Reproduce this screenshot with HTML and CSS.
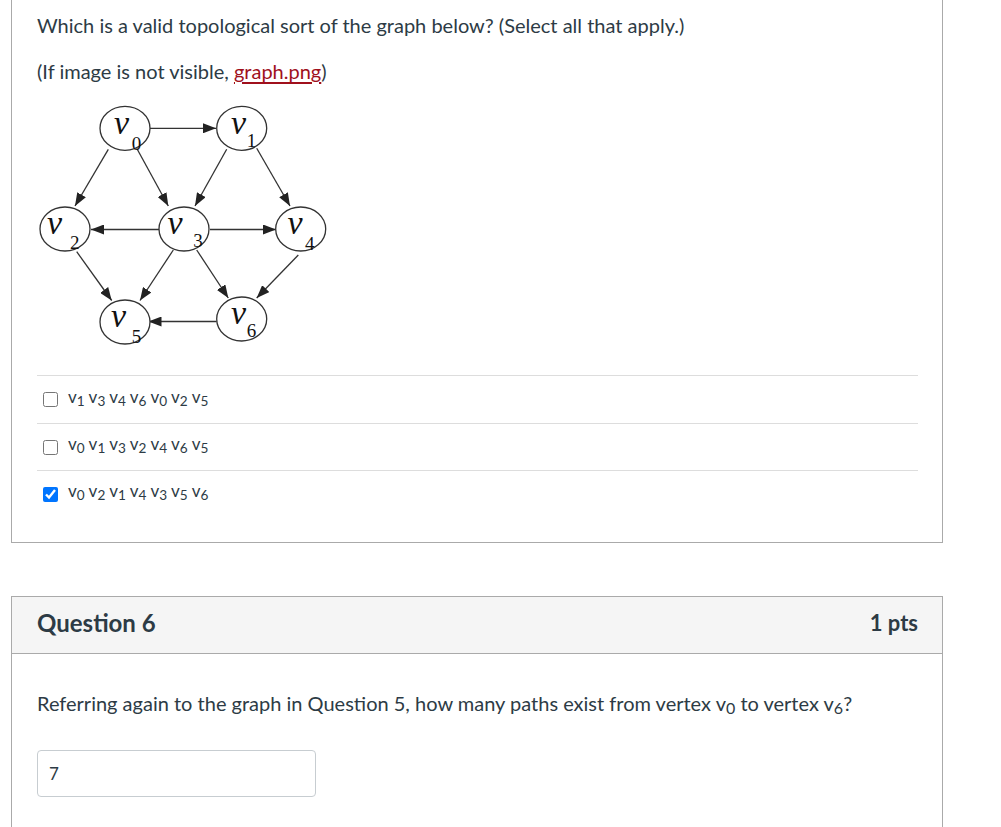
FILE: index.html
```html
<!DOCTYPE html>
<html lang="en">
<head>
<meta charset="utf-8">
<title>Quiz</title>
<link rel="stylesheet" href="styles.css">
</head>
<body>
<div class="page">
  <section class="card card-first">
    <div class="q-text">
      <p class="q-line">Which is a valid topological sort of the graph below? (Select all that apply.)</p>
      <p class="q-line">(If image is not visible, <a class="link" href="#">graph.png</a>)</p>
      <svg class="graph" width="300" height="250" viewBox="37 100 300 250" xmlns="http://www.w3.org/2000/svg">
        <defs>
          <marker id="ah" markerUnits="userSpaceOnUse" markerWidth="13" markerHeight="10" refX="13" refY="5" orient="auto">
            <path d="M0,0 L13,5 L0,10 z" fill="#222"/>
          </marker>
        </defs>
        <g stroke="#333" stroke-width="1.3" fill="none" marker-end="url(#ah)">
          <line x1="150" y1="128.3" x2="216" y2="128.3"/>
          <line x1="108.3" y1="149.3" x2="75" y2="206"/>
          <line x1="136.7" y1="148.3" x2="168.3" y2="206"/>
          <line x1="226.7" y1="149.3" x2="195" y2="206"/>
          <line x1="256.7" y1="148.3" x2="290" y2="206"/>
          <line x1="160" y1="229.5" x2="91" y2="229.5"/>
          <line x1="210" y1="229.5" x2="276" y2="229.5"/>
          <line x1="76.7" y1="251.7" x2="111.7" y2="300.5"/>
          <line x1="173.3" y1="250" x2="140" y2="300.5"/>
          <line x1="196.7" y1="250" x2="228.3" y2="298"/>
          <line x1="298.3" y1="255" x2="256.7" y2="298"/>
          <line x1="216.7" y1="321.5" x2="148.5" y2="321.5"/>
        </g>
        <g stroke="#333" stroke-width="1.3" fill="#fff">
          <ellipse cx="125" cy="128.3" rx="25" ry="22"/>
          <ellipse cx="241.7" cy="128.3" rx="25" ry="22"/>
          <ellipse cx="65" cy="229" rx="25" ry="22"/>
          <ellipse cx="184" cy="229" rx="25" ry="22"/>
          <ellipse cx="300.7" cy="229" rx="25" ry="22"/>
          <ellipse cx="125" cy="322" rx="25" ry="22"/>
          <ellipse cx="241.7" cy="319" rx="25" ry="22"/>
        </g>
        <g class="node-v">
          <text x="114" y="134">v</text>
          <text x="231" y="134">v</text>
          <text x="47" y="234">v</text>
          <text x="167.5" y="234">v</text>
          <text x="287.5" y="234">v</text>
          <text x="111" y="327">v</text>
          <text x="231" y="324">v</text>
        </g>
        <g class="node-sub">
          <text x="131.7" y="150">0</text>
          <text x="246.7" y="147">1</text>
          <text x="70" y="249">2</text>
          <text x="193.3" y="247">3</text>
          <text x="305" y="250">4</text>
          <text x="131.7" y="343">5</text>
          <text x="246.7" y="337">6</text>
        </g>
      </svg>
    </div>
    <div class="answers">
      <label class="answer">
        <input class="check" type="checkbox">
        <span class="answer-text">v<sub>1</sub> v<sub>3</sub> v<sub>4</sub> v<sub>6</sub> v<sub>0</sub> v<sub>2</sub> v<sub>5</sub></span>
      </label>
      <label class="answer">
        <input class="check" type="checkbox">
        <span class="answer-text">v<sub>0</sub> v<sub>1</sub> v<sub>3</sub> v<sub>2</sub> v<sub>4</sub> v<sub>6</sub> v<sub>5</sub></span>
      </label>
      <label class="answer">
        <input class="check" type="checkbox" checked>
        <span class="answer-text">v<sub>0</sub> v<sub>2</sub> v<sub>1</sub> v<sub>4</sub> v<sub>3</sub> v<sub>5</sub> v<sub>6</sub></span>
      </label>
    </div>
  </section>

  <section class="card card-second">
    <header class="card-header">
      <h2 class="q-title">Question 6</h2>
      <span class="q-pts">1 pts</span>
    </header>
    <div class="q-body">
      <p class="q-line">Referring again to the graph in Question 5, how many paths exist from vertex v<sub>0</sub> to vertex v<sub>6</sub>?</p>
      <input class="num-input" type="text" value="7">
    </div>
  </section>
</div>
</body>
</html>
```
FILE: styles.css
```css
html, body {
  margin: 0;
  padding: 0;
  background: #fff;
}

body {
  font-family: Lato, "Noto Sans", sans-serif;
  color: #2d3b45;
}

.page {
  padding-left: 11px;
  width: 932px;
}

.card {
  box-sizing: border-box;
  width: 932px;
  border: 1px solid #aaaaaa;
  background: #fff;
}

.card-first {
  border-top: none;
  padding: 0 24px 25px 25px;
}

.q-line {
  margin: 0;
  font-size: 20px;
  line-height: 30px;
}

.q-text .q-line:first-child {
  padding-top: 10px;
}

.q-text .q-line + .q-line {
  margin-top: 16px;
}

.link {
  color: #a0101c;
  text-decoration: underline;
  text-decoration-thickness: 2px;
  text-underline-offset: 3px;
}

.graph {
  display: block;
  margin-top: 14px;
}

.node-v text {
  font-family: "Liberation Serif", serif;
  font-style: italic;
  font-size: 34px;
  fill: #111;
}

.node-sub text {
  font-family: "Liberation Serif", serif;
  font-size: 19px;
  fill: #111;
}

.answers {
  margin-top: 25px;
}

.answer {
  display: flex;
  align-items: center;
  gap: 10px;
  height: 47px;
  border-top: 1px solid #dddddd;
  padding-left: 6px;
}

.answer + .answer {
  height: 46px;
}

.check {
  width: 15px;
  height: 15px;
  margin: 0;
  accent-color: #0075ff;
}

.answer-text {
  font-size: 17px;
  line-height: 20px;
  margin-bottom: 6px;
}

.answer-text sub,
.q-body sub {
  font-size: 0.8em;
  vertical-align: -3px;
  line-height: 0;
}

.card-second {
  margin-top: 53px;
  margin-bottom: 40px;
}

.card-header {
  display: flex;
  align-items: center;
  justify-content: space-between;
  height: 57px;
  padding: 0 24px 5px 25px;
  box-sizing: border-box;
  background: #f5f5f5;
  border-bottom: 1px solid #aaaaaa;
}

.q-title {
  margin: 0;
  font-size: 24px;
  font-weight: 700;
}

.q-pts {
  font-size: 22px;
  font-weight: 700;
}

.q-body {
  padding: 34px 25px 40px;
}

.num-input {
  display: block;
  box-sizing: border-box;
  width: 279px;
  height: 47px;
  margin-top: 32px;
  padding: 0 11px;
  border: 1px solid #c7cdd1;
  border-radius: 4px;
  font-family: Lato, sans-serif;
  font-size: 17px;
  color: #2d3b45;
  background: #fff;
}
```
